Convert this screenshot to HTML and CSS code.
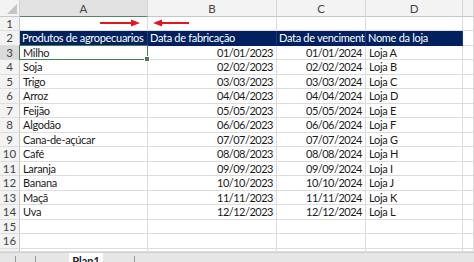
FILE: index.html
```html
<!DOCTYPE html>
<html lang="pt">
<head>
<meta charset="utf-8">
<link rel="stylesheet" href="styles.css">
</head>
<body>
<div class="sheet">
  <div class="grid">
    <div class="corner"><span class="tri"></span></div>
    <div class="ch sel">A</div><div class="ch">B</div><div class="ch">C</div><div class="ch">D</div><div class="ch"></div>

    <div class="rh">1</div>
    <div class="c arrows-cell">
      <svg class="arrows" width="120" height="10" viewBox="0 0 120 10">
        <line x1="80" y1="5" x2="114" y2="5" stroke="#e8141b" stroke-width="2"/>
        <polygon points="120,5 111,1.5 111,8.5" fill="#e8141b"/>
      </svg>
    </div>
    <div class="c"><svg class="arrow-left" width="40" height="10" viewBox="0 0 40 10"><line x1="10" y1="5" x2="40" y2="5" stroke="#e8141b" stroke-width="2"/><polygon points="4,5 13,1.5 13,8.5" fill="#e8141b"/></svg></div>
    <div class="c"></div><div class="c"></div><div class="c"></div>

    <div class="rh">2</div>
    <div class="c hd">Produtos de agropecuarios</div><div class="c hd">Data de fabricação</div><div class="c hd">Data de vencimento</div><div class="c hd">Nome da loja</div><div class="c"></div>

    <div class="rh rsel">3</div><div class="c active">Milho</div><div class="c num">01/01/2023</div><div class="c num">01/01/2024</div><div class="c">Loja A</div><div class="c"></div>
    <div class="rh">4</div><div class="c">Soja</div><div class="c num">02/02/2023</div><div class="c num">02/02/2024</div><div class="c">Loja B</div><div class="c"></div>
    <div class="rh">5</div><div class="c">Trigo</div><div class="c num">03/03/2023</div><div class="c num">03/03/2024</div><div class="c">Loja C</div><div class="c"></div>
    <div class="rh">6</div><div class="c">Arroz</div><div class="c num">04/04/2023</div><div class="c num">04/04/2024</div><div class="c">Loja D</div><div class="c"></div>
    <div class="rh">7</div><div class="c">Feijão</div><div class="c num">05/05/2023</div><div class="c num">05/05/2024</div><div class="c">Loja E</div><div class="c"></div>
    <div class="rh">8</div><div class="c">Algodão</div><div class="c num">06/06/2023</div><div class="c num">06/06/2024</div><div class="c">Loja F</div><div class="c"></div>
    <div class="rh">9</div><div class="c">Cana-de-açúcar</div><div class="c num">07/07/2023</div><div class="c num">07/07/2024</div><div class="c">Loja G</div><div class="c"></div>
    <div class="rh">10</div><div class="c">Café</div><div class="c num">08/08/2023</div><div class="c num">08/08/2024</div><div class="c">Loja H</div><div class="c"></div>
    <div class="rh">11</div><div class="c">Laranja</div><div class="c num">09/09/2023</div><div class="c num">09/09/2024</div><div class="c">Loja I</div><div class="c"></div>
    <div class="rh">12</div><div class="c">Banana</div><div class="c num">10/10/2023</div><div class="c num">10/10/2024</div><div class="c">Loja J</div><div class="c"></div>
    <div class="rh">13</div><div class="c">Maçã</div><div class="c num">11/11/2023</div><div class="c num">11/11/2024</div><div class="c">Loja K</div><div class="c"></div>
    <div class="rh">14</div><div class="c">Uva</div><div class="c num">12/12/2023</div><div class="c num">12/12/2024</div><div class="c">Loja L</div><div class="c"></div>
    <div class="rh">15</div><div class="c"></div><div class="c"></div><div class="c"></div><div class="c"></div><div class="c"></div>
    <div class="rh">16</div><div class="c"></div><div class="c"></div><div class="c"></div><div class="c"></div><div class="c"></div>
    <div class="rh"></div><div class="c"></div><div class="c"></div><div class="c"></div><div class="c"></div><div class="c"></div>
  </div>
  <div class="tabs">
    <span class="nav"></span><span class="nav"></span>
    <span class="tab">Plan1</span>
    <span class="nav after"></span>
  </div>
</div>
</body>
</html>
```
FILE: styles.css
```css
html, body {
  margin: 0;
  padding: 0;
  background: #ffffff;
}
.sheet {
  width: 474px;
  height: 262px;
  overflow: hidden;
  display: flex;
  flex-direction: column;
  font-family: "Lato", "Open Sans", sans-serif;
  font-size: 11px;
  color: #1a1a1a;
}
.grid {
  display: grid;
  grid-template-columns: 20px 128px 129px 89px 97px 11px;
  grid-template-rows: 17px repeat(16, 14.47px) 1fr;
  height: 252px;
  flex: none;
}
.corner {
  background: #f3f3f3;
  border-right: 1px solid #d0d0d0;
  border-bottom: 1px solid #c6c6c6;
  position: relative;
}
.tri {
  position: absolute;
  right: 2px;
  bottom: 2px;
  width: 0;
  height: 0;
  border-left: 10px solid transparent;
  border-bottom: 10px solid #c4c4c4;
}
.ch {
  background: #f3f3f3;
  border-right: 1px solid #d6d6d6;
  border-bottom: 1px solid #c6c6c6;
  color: #444;
  text-align: center;
  line-height: 17px;
  font-size: 11.5px;
}
.ch.sel {
  background: #e2e2e2;
  border-bottom: 1px solid #4f8a63;
}
.rh {
  background: #f3f3f3;
  border-right: 1px solid #c6c6c6;
  border-bottom: 1px solid #dedede;
  color: #444;
  text-align: center;
  font-size: 11.5px;
  line-height: 14px;
  overflow: hidden;
}
.rh.rsel {
  background: #dadada;
  border-right: 1px solid #4f8a63;
}
.c {
  border-right: 1px solid #dcdcdc;
  border-bottom: 1px solid #dcdcdc;
  padding: 0 2px 0 3px;
  line-height: 14px;
  letter-spacing: -0.3px;
  white-space: nowrap;
  overflow: hidden;
  position: relative;
}
.c.num {
  text-align: right;
  letter-spacing: -0.5px;
  padding-right: 3px;
}
.c.hd {
  background: #002060;
  color: #ffffff;
  border-right-color: #1c3870;
  border-bottom-color: #002060;
  padding-left: 2px;
}
.c.active {
  overflow: visible;
}
.c.active::after {
  content: "";
  position: absolute;
  left: -1px;
  top: -1px;
  right: -1px;
  bottom: -1px;
  border: 1px solid #3f7d55;
  pointer-events: none;
}
.c.active::before {
  content: "";
  position: absolute;
  right: -3px;
  bottom: -3px;
  width: 4px;
  height: 4px;
  background: #3f7d55;
  border: 1px solid #fff;
  z-index: 2;
}
.arrows-cell {
  overflow: visible;
}
.arrows {
  position: absolute;
  left: 0;
  top: 1px;
}
.arrow-left {
  position: absolute;
  left: 1px;
  top: 1px;
}
.tabs {
  flex: 1;
  background: #e6e6e6;
  border-top: 1px solid #d0d0d0;
  display: flex;
  align-items: flex-start;
  position: relative;
}
.nav {
  width: 1px;
  height: 6px;
  background: #9a9a9a;
  margin-top: 3px;
}
.nav:first-child {
  margin-left: 15px;
}
.nav + .nav {
  margin-left: 19px;
}
.tab {
  margin-left: 33px;
  width: 34px;
  height: 12px;
  background: #ffffff;
  font-weight: bold;
  font-size: 11px;
  text-align: center;
  line-height: 16px;
  color: #222;
}
.nav.after {
  margin-left: 31px;
}
```
